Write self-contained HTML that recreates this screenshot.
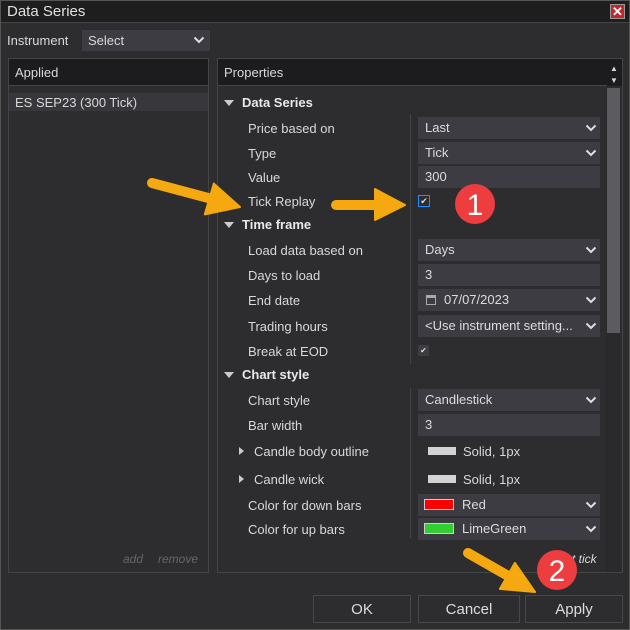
<!DOCTYPE html>
<html><head><meta charset="utf-8"><style>
*{margin:0;padding:0;box-sizing:border-box}
body{width:630px;height:630px;background:#2d2d30;font-family:"Liberation Sans",sans-serif;font-size:13px;color:#d8d8d8;position:relative;overflow:hidden}
.a{position:absolute}
.t{position:absolute;white-space:nowrap;line-height:16px}
.v{position:absolute;left:418px;width:182px;height:22px;background:#3c3c42;padding-left:7px;line-height:22px;color:#dcdcdc}
.chev{position:absolute;right:3px;top:7px;width:12px;height:8px}
.b{font-weight:bold;color:#e8e8e8}
.tri{position:absolute;width:0;height:0;border-left:5px solid transparent;border-right:5px solid transparent;border-top:6px solid #ccc}
.rtri{position:absolute;width:0;height:0;border-top:4px solid transparent;border-bottom:4px solid transparent;border-left:5px solid #ccc}
.btn{position:absolute;top:595px;height:28px;border:1px solid #48484c;background:#2d2d30;text-align:center;line-height:27px;font-size:15px;color:#dcdcdc}
</style></head><body>
<svg width="0" height="0" style="position:absolute"><defs><symbol id="cv" viewBox="0 0 12 8"><path d="M1.5 1.5 L6 6 L10.5 1.5" fill="none" stroke="#ddd" stroke-width="2"/></symbol></defs></svg>
<div class="a" style="left:0;top:0;width:630px;height:630px;border:1px solid #555"></div>
<div class="a" style="left:1px;top:1px;width:628px;height:22px;background:#1e1e1e;border-bottom:1px solid #444"></div>
<div class="t" style="left:7px;top:4px;font-size:15px;color:#e0e0e0">Data Series</div>
<div class="a" style="left:610px;top:4px;width:15px;height:15px;background:#c0282a;border:1px solid #999;color:#fff;font-size:13px;line-height:13px;text-align:center;font-weight:bold">✕</div>
<div class="t" style="left:7px;top:33px">Instrument</div>
<div class="a" style="left:82px;top:30px;width:128px;height:21px;background:#3c3c42"></div>
<div class="t" style="left:88px;top:33px">Select</div>
<svg class="a" style="left:193px;top:36px" width="12" height="8"><use href="#cv"/></svg>
<!-- applied panel -->
<div class="a" style="left:8px;top:58px;width:201px;height:515px;border:1px solid #444"></div>
<div class="a" style="left:9px;top:59px;width:199px;height:27px;background:#1c1c1e;border-bottom:1px solid #444"></div>
<div class="t" style="left:15px;top:65px">Applied</div>
<div class="a" style="left:9px;top:93px;width:199px;height:18px;background:#38383c"></div>
<div class="t" style="left:15px;top:95px">ES SEP23 (300 Tick)</div>
<div class="t" style="left:123px;top:551px;font-style:italic;color:#666;font-size:12px">add</div>
<div class="t" style="left:158px;top:551px;font-style:italic;color:#666;font-size:12px">remove</div>
<!-- properties -->
<div class="a" style="left:217px;top:58px;width:406px;height:515px;border:1px solid #444"></div>
<div class="a" style="left:218px;top:59px;width:390px;height:27px;background:#1c1c1e;border-bottom:1px solid #444"></div>
<div class="a" style="left:607px;top:59px;width:15px;height:27px;background:#1c1c1e"></div>
<div class="t" style="left:224px;top:65px">Properties</div>
<div class="t" style="left:610px;top:61px;font-size:8px">▲</div>
<div class="t" style="left:610px;top:73px;font-size:8px">▼</div>
<div class="a" style="left:606px;top:87px;width:15px;height:485px;background:#2a2a2c"></div>
<div class="a" style="left:607px;top:88px;width:13px;height:245px;background:#5c5c60"></div>
<div class="a" style="left:410px;top:114px;width:1px;height:250px;background:#444"></div>
<div class="a" style="left:410px;top:388px;width:1px;height:150px;background:#444"></div>

<div class="tri" style="left:224px;top:100px"></div><div class="t b" style="left:242px;top:95px">Data Series</div>
<div class="t" style="left:248px;top:121px">Price based on</div><div class="v" style="top:117px">Last<svg class="chev"><use href="#cv"/></svg></div>
<div class="t" style="left:248px;top:146px">Type</div><div class="v" style="top:142px">Tick<svg class="chev"><use href="#cv"/></svg></div>
<div class="t" style="left:248px;top:170px">Value</div><div class="v" style="top:166px">300</div>
<div class="t" style="left:248px;top:194px">Tick Replay</div>
<div class="a" style="left:418px;top:195px;width:12px;height:12px;border:1px solid #1e90ff;color:#ddd;font-size:9px;line-height:10px;text-align:center">✔</div>
<div class="tri" style="left:224px;top:222px"></div><div class="t b" style="left:242px;top:217px">Time frame</div>
<div class="t" style="left:248px;top:243px">Load data based on</div><div class="v" style="top:239px">Days<svg class="chev"><use href="#cv"/></svg></div>
<div class="t" style="left:248px;top:268px">Days to load</div><div class="v" style="top:264px">3</div>
<div class="t" style="left:248px;top:293px">End date</div><div class="v" style="top:289px;padding-left:26px">07/07/2023<svg class="chev"><use href="#cv"/></svg><span class="a" style="left:8px;top:6px;width:10px;height:10px;border:1px solid #aaa;border-top:3px solid #aaa"></span></div>
<div class="t" style="left:248px;top:319px">Trading hours</div><div class="v" style="top:315px">&lt;Use instrument setting...<svg class="chev"><use href="#cv"/></svg></div>
<div class="t" style="left:248px;top:344px">Break at EOD</div>
<div class="a" style="left:418px;top:345px;width:11px;height:11px;background:#3c3c42;color:#ddd;font-size:8px;line-height:11px;text-align:center">✔</div>
<div class="tri" style="left:224px;top:372px"></div><div class="t b" style="left:242px;top:367px">Chart style</div>
<div class="t" style="left:248px;top:393px">Chart style</div><div class="v" style="top:389px">Candlestick<svg class="chev"><use href="#cv"/></svg></div>
<div class="t" style="left:248px;top:418px">Bar width</div><div class="v" style="top:414px">3</div>
<div class="rtri" style="left:239px;top:447px"></div><div class="t" style="left:254px;top:444px">Candle body outline</div>
<div class="a" style="left:428px;top:447px;width:28px;height:8px;background:#d3d3d3"></div><div class="t" style="left:463px;top:444px">Solid, 1px</div>
<div class="rtri" style="left:239px;top:475px"></div><div class="t" style="left:254px;top:472px">Candle wick</div>
<div class="a" style="left:428px;top:475px;width:28px;height:8px;background:#d3d3d3"></div><div class="t" style="left:463px;top:472px">Solid, 1px</div>
<div class="t" style="left:248px;top:498px">Color for down bars</div><div class="v" style="top:494px;padding-left:44px">Red<svg class="chev"><use href="#cv"/></svg><span class="a" style="left:6px;top:5px;width:30px;height:11px;background:#f00;border:1px solid #ccc"></span></div>
<div class="t" style="left:248px;top:522px">Color for up bars</div><div class="v" style="top:518px;padding-left:44px">LimeGreen<svg class="chev"><use href="#cv"/></svg><span class="a" style="left:6px;top:5px;width:30px;height:11px;background:#32cd32;border:1px solid #ccc"></span></div>
<div class="t" style="left:572px;top:551px;font-style:italic;font-size:12px">t tick</div>

<div class="btn" style="left:313px;width:98px">OK</div>
<div class="btn" style="left:418px;width:102px">Cancel</div>
<div class="btn" style="left:525px;width:98px">Apply</div>

<svg class="a" style="left:0;top:0" width="630" height="630">
<g fill="#f5a80f" stroke="#f5a80f">
<line x1="152" y1="183" x2="212" y2="199" stroke-width="10" stroke-linecap="round"/>
<polygon points="213.8,183.6 204.8,214.4 240,207" stroke-width="2" stroke-linejoin="round"/>
<line x1="336" y1="205" x2="378" y2="205" stroke-width="10" stroke-linecap="round"/>
<polygon points="375,189 375,220 405,205" stroke-width="2" stroke-linejoin="round"/>
<line x1="468" y1="553" x2="510" y2="577" stroke-width="10" stroke-linecap="round"/>
<polygon points="514.9,562.9 499.9,588.9 535,592" stroke-width="2" stroke-linejoin="round"/>
</g>
<circle cx="475" cy="204" r="20" fill="#ee3d3f"/>
<text x="475" y="215" font-family="Liberation Sans" font-size="30" fill="#fff" text-anchor="middle">1</text>
<circle cx="557" cy="570" r="20" fill="#ee3d3f"/>
<text x="557" y="581" font-family="Liberation Sans" font-size="30" fill="#fff" text-anchor="middle">2</text>
</svg>
</body></html>
